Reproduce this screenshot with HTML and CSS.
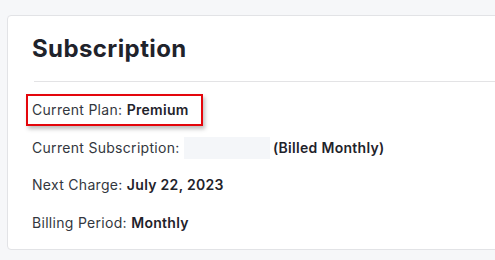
FILE: index.html
```html
<!DOCTYPE html>
<html>
<head>
<meta charset="utf-8">
<link rel="stylesheet" href="styles.css">
</head>
<body>
<div class="card">
  <h1 class="title">Subscription</h1>
  <div class="divider"></div>
  <div class="rows">
    <div class="row highlight">Current Plan: <b>Premium</b></div>
    <div class="row">Current Subscription: <span class="redact"></span><b>(Billed Monthly)</b></div>
    <div class="row">Next Charge: <b>July 22, 2023</b></div>
    <div class="row">Billing Period: <b>Monthly</b></div>
  </div>
</div>
</body>
</html>
```
FILE: styles.css
```css
html, body {
  margin: 0;
  padding: 0;
  overflow: hidden;
}
body {
  background: #f6f7f9;
  width: 495px;
  height: 260px;
  font-family: Inter, "Noto Sans", sans-serif;
  color: #2a2e36;
}
.card {
  margin: 15px 0 0 7px;
  width: 540px;
  height: 235px;
  box-sizing: border-box;
  background: #fff;
  border: 1px solid #e2e3e6;
  border-radius: 4px;
  padding: 0 0 0 24px;
}
.title {
  margin: 0;
  padding-top: 17px;
  font-size: 24px;
  line-height: 32px;
  font-weight: 700;
  letter-spacing: 0.4px;
  color: #1f232b;
}
.divider {
  margin: 16px 0 0 2px;
  height: 1px;
  background: #e3e3e5;
}
.rows {
  display: flex;
  flex-direction: column;
  gap: 5.5px;
  margin-top: 12px;
  margin-left: -6px;
}
.row {
  font-size: 14px;
  line-height: 20px;
  letter-spacing: 0.3px;
  padding: 4px 12px 4px 4px;
  height: 20px;
  display: flex;
  align-items: center;
  white-space: pre;
  color: #33373e;
  border: 2px solid transparent;
}
.row b {
  font-weight: 600;
  color: #1f232b;
}
.highlight {
  align-self: flex-start;
  border-color: #e4060c;
  box-shadow: 2px 3px 4px rgba(0,0,0,0.25);
}
.redact {
  display: inline-block;
  width: 86px;
  height: 22px;
  background: #f4f6f9;
  margin: 0 3px 0 0;
}
```
